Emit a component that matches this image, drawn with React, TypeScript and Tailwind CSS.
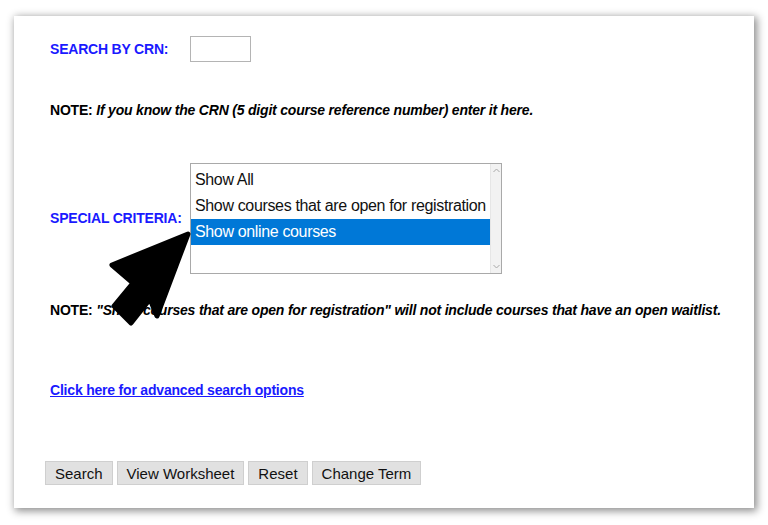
import React from "react";

const options = [
  "Show All",
  "Show courses that are open for registration",
  "Show online courses",
];

const buttons = ["Search", "View Worksheet", "Reset", "Change Term"];

function Pointer() {
  // big black cursor arrow pointing at the listbox
  return (
    <svg className="pointer-events-none absolute left-0 top-0" width="768" height="525" viewBox="0 0 768 525">
      <polygon
        points="188,234 157,316 150,299 131,323 114,306 133,283 112,265"
        fill="#000"
        stroke="#000"
        strokeWidth="5"
        strokeLinejoin="round"
      />
    </svg>
  );
}

export default function App() {
  return (
    <div className="relative h-[525px] w-[768px] overflow-hidden bg-white font-['Liberation_Sans',Arial,sans-serif]">
      <div className="absolute left-[14px] top-[16px] h-[492px] w-[740px] bg-white shadow-[2px_2px_8px_1px_rgba(0,0,0,0.45)]">
        <div className="flex flex-col pl-[36px] pt-[20px]">
          <div className="flex h-[26px] items-center">
            <span className="w-[140px] text-[14px] font-bold tracking-[-0.2px] text-[#1a1aff]">SEARCH BY CRN:</span>
            <input className="h-[26px] w-[61px] border border-[#b4b4b4] bg-white outline-none" />
          </div>

          <p className="mt-[38px] text-[14px] font-bold tracking-[-0.2px] text-black">
            NOTE: <i>If you know the CRN (5 digit course reference number) enter it here.</i>
          </p>

          <div className="mt-[42px] flex items-center">
            <span className="w-[140px] text-[14px] font-bold tracking-[-0.2px] text-[#1a1aff]">SPECIAL CRITERIA:</span>
            <div className="flex h-[111px] w-[312px] border border-[#a9a9a9] bg-white">
              <ul className="flex-1 pt-[3px]">
                {options.map((o, i) => (
                  <li
                    key={o}
                    className={
                      i === 2
                        ? "flex h-[26px] items-center whitespace-nowrap bg-[#0078d7] pl-[4px] text-[16px] tracking-[-0.35px] text-white"
                        : "flex h-[26px] items-center whitespace-nowrap pl-[4px] text-[16px] tracking-[-0.35px] text-[#111]"
                    }
                  >
                    {o}
                  </li>
                ))}
              </ul>
              <div className="flex w-[11px] flex-col items-center justify-between border-l border-[#e6e6e6] bg-[#f2f2f2] py-[4px] text-[#a8a8a8]">
                <svg width="7" height="5" viewBox="0 0 7 5">
                  <path d="M0.5 4 L3.5 1 L6.5 4" fill="none" stroke="currentColor" strokeWidth="1" />
                </svg>
                <svg width="7" height="5" viewBox="0 0 7 5">
                  <path d="M0.5 1 L3.5 4 L6.5 1" fill="none" stroke="currentColor" strokeWidth="1" />
                </svg>
              </div>
            </div>
          </div>

          <p className="mt-[26px] text-[14px] font-bold tracking-[-0.2px] text-black">
            NOTE: <i>"Show courses that are open for registration" will not include courses that have an open waitlist.</i>
          </p>

          <a href="#" className="mt-[59px] w-fit text-[14px] font-bold tracking-[-0.2px] text-[#1a1aff] underline">
            Click here for advanced search options
          </a>

          <div className="-ml-[5px] mt-[60px] flex gap-[4px]">
            {buttons.map((b) => (
              <button
                key={b}
                className="h-[24px] border border-[#cfcfcf] bg-[#e1e1e1] px-[9px] text-[15px] leading-none text-[#111]"
              >
                {b}
              </button>
            ))}
          </div>
        </div>
      </div>
      <Pointer />
    </div>
  );
}
